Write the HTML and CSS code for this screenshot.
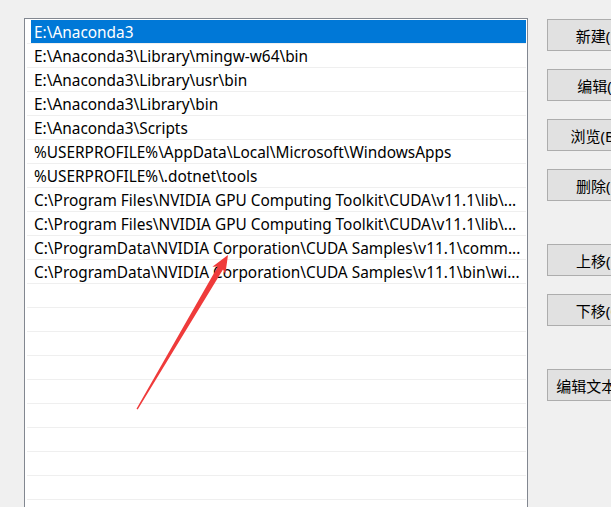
FILE: index.html
```html
<html lang="zh-CN">
<head>
    <meta charset="utf-8">
    <title>编辑环境变量</title>
    <link rel="stylesheet" href="styles.css">
</head>
<body>
<div class="window">
    <div class="edge"></div>

    <div class="list">
        <div class="row selected"><span class="cell">E:\Anaconda3</span></div>
        <div class="row"><span class="cell">E:\Anaconda3\Library\mingw-w64\bin</span></div>
        <div class="row"><span class="cell">E:\Anaconda3\Library\usr\bin</span></div>
        <div class="row"><span class="cell">E:\Anaconda3\Library\bin</span></div>
        <div class="row"><span class="cell">E:\Anaconda3\Scripts</span></div>
        <div class="row"><span class="cell">%USERPROFILE%\AppData\Local\Microsoft\WindowsApps</span></div>
        <div class="row"><span class="cell">%USERPROFILE%\.dotnet\tools</span></div>
        <div class="row"><span class="cell">C:\Program Files\NVIDIA GPU Computing Toolkit\CUDA\v11.1\lib\...</span></div>
        <div class="row"><span class="cell">C:\Program Files\NVIDIA GPU Computing Toolkit\CUDA\v11.1\lib\...</span></div>
        <div class="row"><span class="cell">C:\ProgramData\NVIDIA Corporation\CUDA Samples\v11.1\comm...</span></div>
        <div class="row"><span class="cell">C:\ProgramData\NVIDIA Corporation\CUDA Samples\v11.1\bin\wi...</span></div>
        <div class="row"><span class="cell"></span></div>
        <div class="row"><span class="cell"></span></div>
        <div class="row"><span class="cell"></span></div>
        <div class="row"><span class="cell"></span></div>
        <div class="row"><span class="cell"></span></div>
        <div class="row"><span class="cell"></span></div>
        <div class="row"><span class="cell"></span></div>
        <div class="row"><span class="cell"></span></div>
        <div class="row"><span class="cell"></span></div>
        <div class="row"><span class="cell"></span></div>
    </div>

    <div class="buttons">
        <button class="btn">新建(N)</button>
        <button class="btn">编辑(E)</button>
        <button class="btn">浏览(B)...</button>
        <button class="btn">删除(D)</button>
        <button class="btn group">上移(U)</button>
        <button class="btn">下移(O)</button>
        <button class="btn group">编辑文本(T)...</button>
    </div>
</div>

<!-- red annotation arrow drawn over the list -->
<svg class="arrow" width="611" height="507" viewBox="0 0 611 507">
    <polygon fill="#ef3b3b"
             points="228,255 225.3,274.3 223,269.4 137.7,409.5 136.5,408.8 217.8,266.4 212.4,266.7"/>
</svg>
</body>
</html>
```

FILE: styles.css
```css
* {
    margin: 0;
    padding: 0;
    box-sizing: border-box;
}

html, body {
    width: 611px;
    height: 507px;
    overflow: hidden;
    background: #f0f0f0;
}

body {
    position: relative;
    font-family: 'Noto Sans', 'Noto Sans CJK SC', sans-serif;
    font-size: 15px;
    color: #000000;
}

.window {
    display: flex;
    align-items: flex-start;
    height: 507px;
    padding-top: 18px;
}

.edge {
    width: 2px;
    height: 507px;
    margin-top: -18px;
    background: #8a8a8a;
    border-left: 1px solid #f0f0f0;
}

.list {
    flex-shrink: 0;
    width: 504px;
    height: 489px;
    margin-left: 23px;
    padding: 0 1px;
    background: #ffffff;
    border: 1px solid #828790;
    border-bottom: none;
    overflow: hidden;
}

.row {
    display: flex;
    height: 24px;
    margin-left: 1px;
    border-top: 1px solid #efefef;
}

.row:first-child {
    border-top-color: #ffffff;
}

.cell {
    flex: 1;
    margin-left: 4px;
    padding: 2px 0 0 3px;
    font-size: 15.4px;
    line-height: 21px;
    white-space: nowrap;
    overflow: hidden;
}

.selected .cell {
    background: #0078d7;
    color: #ffffff;
}

.buttons {
    display: flex;
    flex-direction: column;
    gap: 18px;
    flex-shrink: 0;
    margin-left: 19px;
    padding-top: 1px;
}

.btn {
    width: 108px;
    height: 32px;
    background: #e1e1e1;
    border: 1px solid #adadad;
    font-family: 'Noto Sans', 'Noto Sans CJK SC', sans-serif;
    font-size: 15px;
    color: #000000;
    white-space: nowrap;
}

.btn.group {
    margin-top: 25px;
}

.arrow {
    position: absolute;
    left: 0;
    top: 0;
}
```
